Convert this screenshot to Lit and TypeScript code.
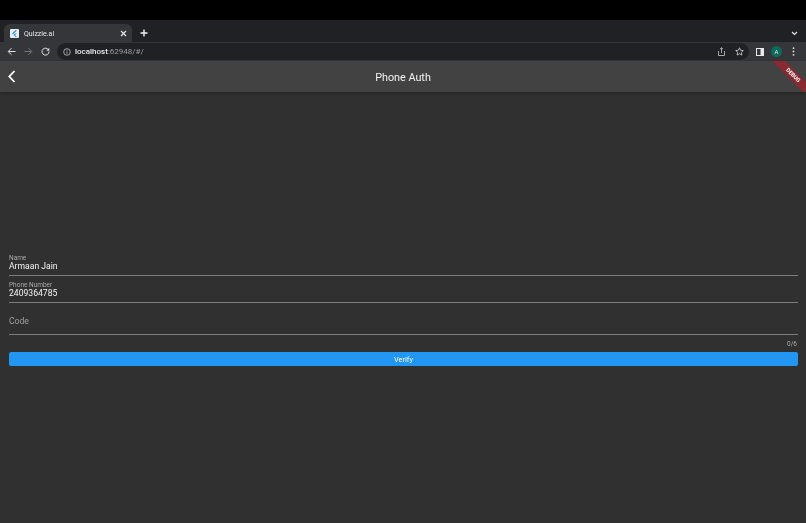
import { LitElement, html, css } from "lit";
import { customElement } from "lit/decorators.js";

@customElement("app-root")
export class AppRoot extends LitElement {
  static styles = css`
    :host { display: flex; flex-direction: column; width: 806px; height: 523px; overflow: hidden; background: #303030; font-family: Roboto, "Liberation Sans", sans-serif; position: relative; color: #fff; filter: blur(0.3px); }
    svg { display: block; }
    .os { height: 20px; background: #000; flex: none; }
    .tabs { height: 22px; flex: none; background: #202124; display: flex; align-items: flex-end; padding-left: 4px; }
    .tab { width: 128px; height: 18px; box-sizing: border-box; background: #35363a; border-radius: 6px 6px 0 0; display: flex; align-items: center; padding: 0 5px 0 6px; font-size: 7px; color: #e8eaed; }
    .fav { width: 9px; height: 9px; background: #e8eef5; border-radius: 1px; margin-right: 5px; flex: none; }
    .tab span { flex: 1; padding-top: 1px; }
    .plus { margin-left: 8px; margin-bottom: 5px; }
    .caret { margin-left: auto; margin-right: 8px; margin-bottom: 6px; }
    .toolbar { height: 19px; flex: none; background: #35363a; display: flex; align-items: center; padding-left: 7px; }
    .nav { display: flex; gap: 8px; margin-right: 7px; }
    .omni { width: 692px; height: 17px; box-sizing: border-box; background: #202124; border-radius: 9px; display: flex; align-items: center; padding: 0 5px 0 6px; font-size: 8px; color: #9aa0a6; }
    .omni b { font-weight: 500; color: #e8eaed; }
    .omni .url { flex: 1; margin-left: 4px; }
    .omni-right { display: flex; gap: 9px; align-items: center; }
    .ext { display: flex; align-items: center; margin-left: 7px; }
    .avatar { width: 11px; height: 11px; border-radius: 50%; background: #0b6b5b; color: #e8eaed; font-size: 6px; display: flex; align-items: center; justify-content: center; margin: 0 10px 0 7px; }
    .appbar { height: 31px; box-sizing: border-box; padding-top: 1px; flex: none; background: #424242; box-shadow: 0 1px 3px rgba(0,0,0,.25); display: flex; align-items: center; justify-content: center; position: relative; font-size: 10.8px; font-weight: 400; color: #f2f2f2; }
    .corner { position: absolute; inset: 0; overflow: hidden; }
    .back { position: absolute; left: 8px; top: 9px; }
    .ribbon { position: absolute; right: -16px; top: 10px; width: 58px; height: 9px; background: #8a2a30; color: #fff; font-size: 5.5px; font-weight: 700; line-height: 9px; text-align: center; transform: rotate(45deg); }
    .form { padding: 160px 8px 0 9px; display: flex; flex-direction: column; }
    .field { border-bottom: 1px solid #7d7d7d; box-sizing: border-box; display: flex; flex-direction: column; }
    .f1 { height: 24px; padding-top: 2px; }
    .f2 { height: 27px; padding-top: 5px; }
    .label { font-size: 6.5px; line-height: 8px; color: #a8a8a8; }
    .value { font-size: 8.6px; line-height: 10px; color: #f4f4f4; margin-top: -1px; }
    .code { height: 32px; justify-content: flex-start; padding-top: 13px; font-size: 8.6px; line-height: 10px; color: #a0a0a0; }
    .count { font-size: 6.5px; line-height: 8px; color: #a8a8a8; text-align: right; margin-top: 5px; padding-right: 1px; }
    .btn { margin-top: 4px; height: 14px; background: #2196f3; border-radius: 2px; font-size: 7.4px; line-height: 15px; text-align: center; color: #fff; font-weight: 400; }
  `;

  render() {
    return html`
      <div class="os"></div>
      <div class="tabs">
        <div class="tab">
          <div class="fav"><svg width="9" height="9" viewBox="0 0 9 9"><path d="M5.5 1 2 4.5l1 1L7 1.5zM5 4.500 3.500 6 5.500 8H7L5 6l2-1.500z" fill="#3f9ad6"/></svg></div>
          <span>Quizzie.ai</span>
          <svg width="7" height="7" viewBox="0 0 7 7"><path d="M1 1l5 5M6 1l-5 5" stroke="#e8eaed" stroke-width="1.1"/></svg>
        </div>
        <svg class="plus" width="8" height="8" viewBox="0 0 8 8"><path d="M4 .5v7M.5 4h7" stroke="#f1f3f4" stroke-width="1.4"/></svg>
        <svg class="caret" width="7" height="5" viewBox="0 0 7 5"><path d="M1 1l2.500 2.500L6 1" stroke="#e8eaed" stroke-width="1.1" fill="none"/></svg>
      </div>
      <div class="toolbar">
        <div class="nav">
          <svg width="9" height="9" viewBox="0 0 9 9"><path d="M8.500 4.500H1.500M4.500 1.200 1.200 4.500 4.500 7.800" stroke="#e0e2e5" fill="none" stroke-width="1"/></svg>
          <svg width="9" height="9" viewBox="0 0 9 9"><path d="M.5 4.500h7M4.500 1.200l3.300 3.300L4.500 7.800" stroke="#74777b" fill="none" stroke-width="1"/></svg>
          <svg width="9" height="9" viewBox="0 0 9 9"><path d="M7.600 3A3.500 3.500 0 1 0 8 4.500" stroke="#e0e2e5" fill="none" stroke-width="1"/><path d="M8.300 .8v3H5.300z" fill="#e0e2e5"/></svg>
        </div>
        <div class="omni">
          <svg width="8" height="8" viewBox="0 0 8 8"><circle cx="4" cy="4" r="3.300" stroke="#c4c7ca" fill="none" stroke-width=".8"/><path d="M4 3.500v2.300M4 2v.8" stroke="#c4c7ca" stroke-width=".8"/></svg>
          <div class="url"><b>localhost</b>:62948/#/</div>
          <div class="omni-right">
            <svg width="9" height="9" viewBox="0 0 9 9"><path d="M1.500 4v4.500h6V4M4.500 6V.8M3 2.200 4.500.8 6 2.200" stroke="#c4c7ca" fill="none" stroke-width=".8"/></svg>
            <svg width="9" height="9" viewBox="0 0 9 9"><path d="M4.500.8l1.100 2.500 2.700.3-2 1.800.6 2.700-2.400-1.400-2.400 1.400.6-2.700-2-1.800 2.700-.3z" stroke="#d6d8db" fill="none" stroke-width=".8"/></svg>
          </div>
        </div>
        <div class="ext">
          <svg width="8" height="8" viewBox="0 0 8 8"><rect x=".5" y=".5" width="7" height="7" fill="none" stroke="#e8eaed"/><rect x="4.500" y="1" width="3" height="6" fill="#e8eaed"/></svg>
          <div class="avatar">A</div>
          <svg width="3" height="9" viewBox="0 0 3 9"><circle cx="1.500" cy="1.200" r=".9" fill="#e0e2e5"/><circle cx="1.500" cy="4.500" r=".9" fill="#e0e2e5"/><circle cx="1.500" cy="7.800" r=".9" fill="#e0e2e5"/></svg>
        </div>
      </div>
      <div class="appbar">
        <svg class="back" width="8" height="13" viewBox="0 0 8 13"><path d="M6.500 1 1.300 6.500l5.200 5.500" stroke="#fff" stroke-width="1.800" fill="none"/></svg>
        Phone Auth
        <div class="corner"><div class="ribbon">DEBUG</div></div>
      </div>
      <div class="form">
        <div class="field f1"><div class="label">Name</div><div class="value">Armaan Jain</div></div>
        <div class="field f2"><div class="label">Phone Number</div><div class="value">2409364785</div></div>
        <div class="field code">Code</div>
        <div class="count">0/6</div>
        <div class="btn">Verify</div>
      </div>
    `;
  }
}
